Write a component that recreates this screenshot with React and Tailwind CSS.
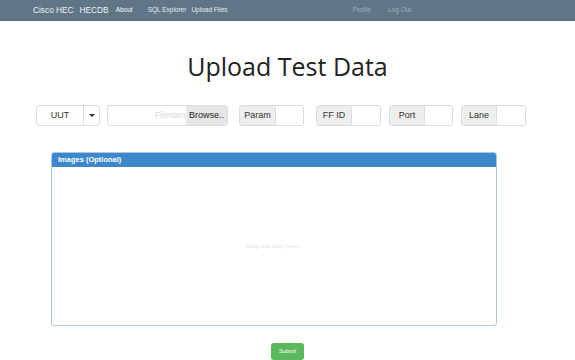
export default function App() {
  const sans = { fontFamily: '"Liberation Sans", Arial, sans-serif' };
  const Group = ({ label, lw, w }) => (
    <div className="flex h-[21px] rounded-[3px] border border-[#dcdcdc] overflow-hidden" style={{ width: w }}>
      <div className="flex items-center justify-center bg-[#eeeeee] border-r border-[#dcdcdc] text-[9px] text-[#333]" style={{ width: lw }}>{label}</div>
      <div className="flex-1 bg-white" />
    </div>
  );
  return (
    <div className="w-[575px] h-[360px] bg-white overflow-hidden relative" style={sans}>
      <div className="h-[21px] bg-[#5f7686] border-b border-[#55697a] flex items-center text-white">
        <span className="ml-[33px] text-[8.3px] text-[#eef2f4]">Cisco HEC</span>
        <span className="ml-[6px] text-[8.3px] text-[#eef2f4]">HECDB</span>
        <span className="ml-[7px] text-[6.5px] text-[#f4f6f7]">About</span>
        <span className="ml-[15px] text-[6.5px] text-[#e8ecee]">SQL Explorer</span>
        <span className="ml-[5px] text-[6.5px] text-[#e8ecee]">Upload Files</span>
        <span className="ml-[125px] text-[6.5px] text-[#9fb0bb]">Profile</span>
        <span className="ml-[17px] text-[6.5px] text-[#9fb0bb]">Log Out</span>
      </div>
      <div className="flex justify-center mt-[30px]">
        <h1 className="text-[25px] leading-[30px] text-[#222]" style={{ fontFamily: '"Open Sans", sans-serif' }}>Upload Test Data</h1>
      </div>
      <div className="flex items-center mt-[24px] ml-[36px]">
        <div className="flex h-[21px] w-[64px] rounded-[3px] border border-[#dcdcdc] overflow-hidden">
          <div className="flex-1 flex items-center justify-center text-[9px] text-[#333]">UUT</div>
          <div className="w-[16px] border-l border-[#dcdcdc] flex items-center justify-center">
            <div className="w-0 h-0 border-l-[3px] border-r-[3px] border-t-[3px] border-l-transparent border-r-transparent border-t-[#333]" />
          </div>
        </div>
        <div className="flex h-[21px] w-[121px] ml-[7px] rounded-[3px] border border-[#dcdcdc] overflow-hidden">
          <div className="flex-1 flex items-center justify-end overflow-hidden text-[8.5px] text-[#d6d6d6] whitespace-nowrap">
            <span className="mr-[-4px]">Filename</span>
          </div>
          <div className="w-[41px] bg-[#e6e6e6] flex items-center justify-center text-[9px] text-[#222] relative">Browse..</div>
        </div>
        <div className="ml-[11px]"><Group label="Param" lw={36} w={65} /></div>
        <div className="ml-[12px]"><Group label="FF ID" lw={35} w={65} /></div>
        <div className="ml-[8px]"><Group label="Port" lw={35} w={64} /></div>
        <div className="ml-[8px]"><Group label="Lane" lw={35} w={65} /></div>
      </div>
      <div className="ml-[51px] mt-[26px] w-[446px] h-[174px] border border-[#a9c9e6] rounded-[3px] flex flex-col overflow-hidden">
        <div className="h-[14px] bg-[#3c88cb] flex items-center pl-[6px] text-[7.5px] font-bold text-white">Images (Optional)</div>
        <div className="flex-1 flex items-center justify-center text-[6px] text-[#e4e4e4]">Drag and drop here...</div>
      </div>
      <div className="flex ml-[271px] mt-[17px]">
        <div className="w-[33px] h-[17px] rounded-[3px] bg-[#5cb85c] flex items-center justify-center text-[5.5px] text-white">Submit</div>
      </div>
    </div>
  );
}
